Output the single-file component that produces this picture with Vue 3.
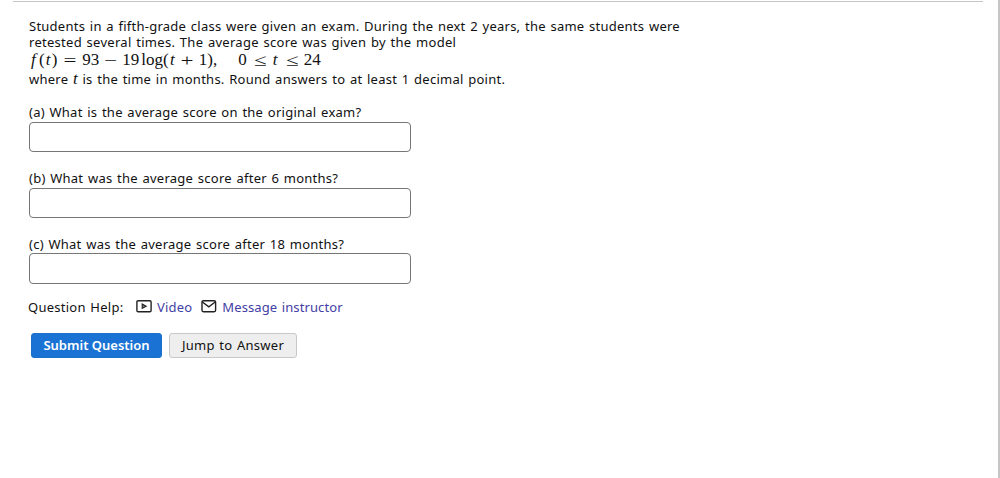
<script setup>
import { reactive } from 'vue'

const parts = reactive([
  { id: 'a', question: '(a) What is the average score on the original exam?', answer: '' },
  { id: 'b', question: '(b) What was the average score after 6 months?', answer: '' },
  { id: 'c', question: '(c) What was the average score after 18 months?', answer: '' },
])
</script>

<template>
  <div class="page">
    <div class="question">
      <div class="intro">
        <div class="line line-1">Students in a fifth-grade class were given an exam. During the next 2 years, the same students were</div>
        <div class="line line-2">retested several times. The average score was given by the model</div>
      </div>

      <!-- f(t) = 93 - 19 log(t + 1) -->
      <div class="math">
        <i class="fn">f</i><span>(</span><i class="var">t</i><span>)</span>
        <span class="op eq">=</span>
        <span>93</span>
        <span class="op minus">−</span>
        <span>19</span><span class="log">log</span><span>(</span><i class="var">t</i>
        <span class="op plus">+</span>
        <span>1</span><span>)</span><span>,</span>
        <span class="zero">0</span>
        <span class="op le">≤</span>
        <i class="var">t</i>
        <span class="op le">≤</span>
        <span>24</span>
      </div>

      <div class="line where">where <i class="tvar">t</i> is the time in months. Round answers to at least 1 decimal point.</div>

      <div v-for="part in parts" :key="part.id" class="part" :class="'part-' + part.id">
        <label class="line" :for="'ans-' + part.id">{{ part.question }}</label>
        <input :id="'ans-' + part.id" v-model="part.answer" type="text" autocomplete="off" />
      </div>
    </div>

    <div class="help">
      <span class="help-label">Question Help:</span>
      <a class="help-link">
        <svg width="16" height="14" viewBox="0 0 16 14" fill="none">
          <rect x="0.9" y="0.7" width="14.2" height="11" rx="1.2" stroke="#222" stroke-width="1.4" />
          <path d="M6.2 4 L10.2 6.2 L6.2 8.4 Z" fill="#777" stroke="#222" stroke-width="1.1" />
        </svg>
        <span class="video">Video</span>
      </a>
      <a class="help-link">
        <svg width="16" height="14" viewBox="0 0 16 14" fill="none" stroke="#222" stroke-width="1.4">
          <rect x="1" y="0.7" width="13.6" height="11" rx="1.4" />
          <path d="M1.4 2 L7.8 6.8 L14.2 2" />
        </svg>
        <span class="message">Message instructor</span>
      </a>
    </div>

    <div class="buttons">
      <button class="btn primary">Submit Question</button>
      <button class="btn secondary">Jump to Answer</button>
    </div>
  </div>
</template>

<style>
body {
  background: #fff;
}
</style>

<style scoped>
.page {
  box-sizing: border-box;
  height: 478px;
  padding: 1px 15px 0 13px;
  border-right: 2px solid #c6c6c6;
  overflow: hidden;
  color: #111;
  font-family: 'Trebuchet MS', 'Noto Sans', sans-serif;
  font-size: 13px;
  line-height: 16px;
}

.question {
  border-top: 1px solid #c4c8c4;
  padding: 16px 0 0 16px;
}

.line {
  white-space: nowrap;
  letter-spacing: 0.25px;
  word-spacing: 1px;
}

.line-2 {
  letter-spacing: 0.28px;
}

.math {
  display: flex;
  align-items: baseline;
  height: 20px;
  padding-left: 2px;
  font-family: 'Liberation Serif', serif;
  font-size: 17px;
  line-height: 20px;
}

.fn {
  width: 8px;
}

.var {
  width: 7px;
  text-align: center;
}

.op {
  display: flex;
  justify-content: center;
  width: 12px;
  transform: translateY(1px) scaleX(1.35);
}

.eq {
  margin: 0 6px 0 7px;
}

.minus {
  width: 11px;
  margin: 0 6px;
}

.log {
  margin-left: 2px;
}

.plus {
  margin: 0 6px 0 5px;
}

.zero {
  margin-left: 21px;
}

.le {
  margin: 0 6px 0 7px;
}

.where {
  height: 17px;
}

.tvar {
  font-family: 'Liberation Serif', serif;
  font-size: 17px;
  line-height: 1;
}

.part {
  display: flex;
  flex-direction: column;
  align-items: flex-start;
  height: 66px;
}

.part-a {
  margin-top: 17px;
}

.part label {
  height: 18px;
}

.part input {
  box-sizing: border-box;
  width: 382px;
  height: 30px;
  border: 1px solid #767676;
  border-radius: 4px;
  padding: 1px 6px;
  background: #fff;
  font: inherit;
  outline: none;
}

.part-c {
  height: 62px;
}

.part-c label {
  height: 17px;
}

.part-c input {
  height: 31px;
}

.help {
  display: flex;
  align-items: center;
  height: 18px;
  padding-left: 15px;
  white-space: nowrap;
}

.help-label {
  width: 108px;
  letter-spacing: 0.25px;
  word-spacing: 1px;
}

.help-link {
  display: flex;
  align-items: center;
  gap: 5px;
  margin-right: 9px;
  color: #4340a6;
  cursor: pointer;
}

.video {
  letter-spacing: 0.2px;
}

.message {
  letter-spacing: 0.1px;
  word-spacing: 1px;
}

.buttons {
  display: flex;
  gap: 7px;
  margin-top: 17px;
  padding-left: 18px;
}

.btn {
  box-sizing: border-box;
  height: 25px;
  border: 1px solid #1b70c9;
  border-radius: 3px;
  padding: 0 0 1px;
  font: inherit;
  cursor: pointer;
}

.primary {
  width: 131px;
  background: #1a73d4;
  color: #fff;
  font-weight: 600;
}

.secondary {
  width: 128px;
  border-color: #c8c8c8;
  background: #eee;
  color: #111;
  letter-spacing: 0.25px;
  word-spacing: 1px;
}
</style>
